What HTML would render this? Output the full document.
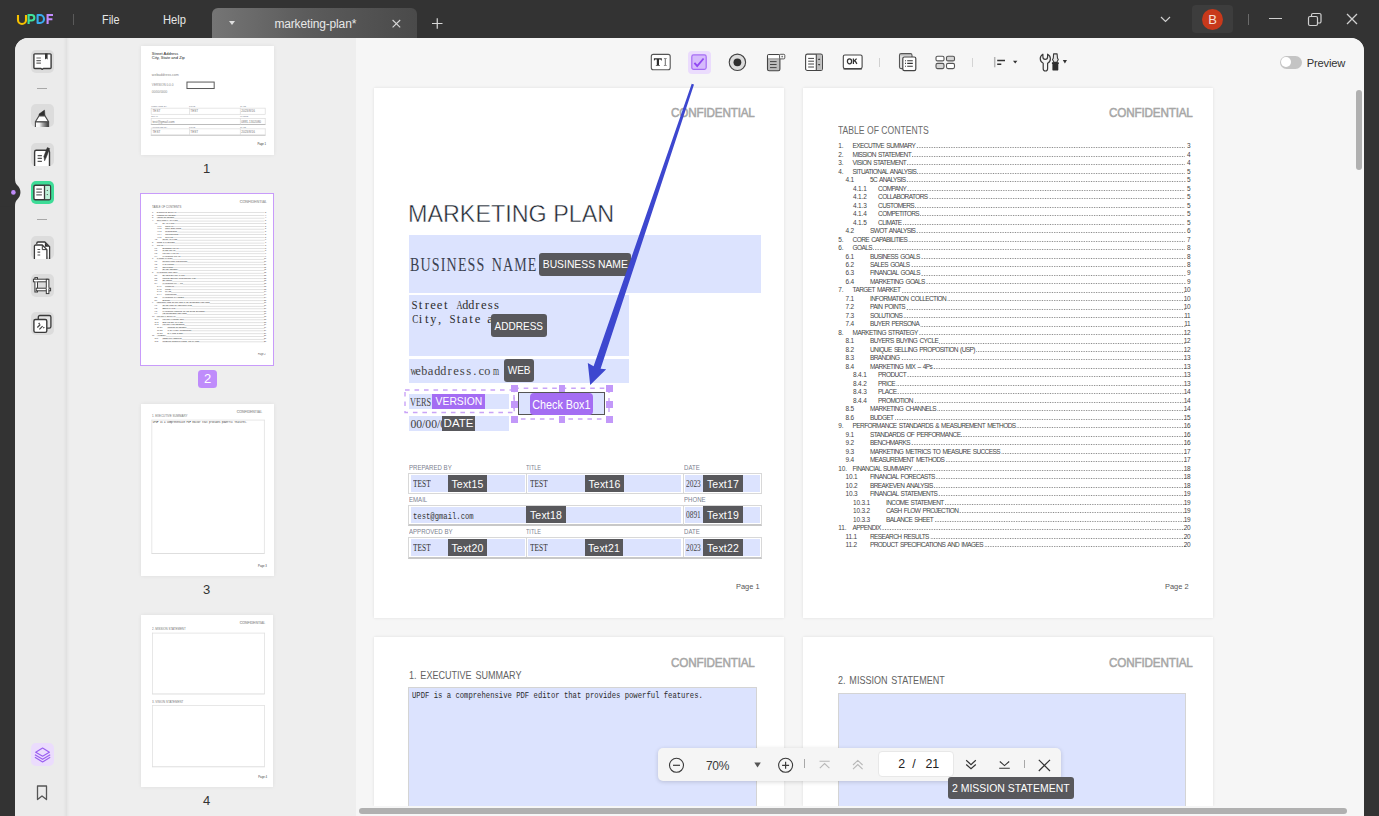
<!DOCTYPE html>
<html><head><meta charset="utf-8">
<style>
*{margin:0;padding:0;box-sizing:border-box}
html,body{width:1379px;height:816px;overflow:hidden;background:#333333;font-family:"Liberation Sans",sans-serif}
.a{position:absolute}
#panel{position:absolute;left:15px;top:38px;width:1349px;height:778px;background:#f6f6f6;border-radius:13px 13px 0 0;overflow:hidden}
#iconbar{position:absolute;left:0;top:0;width:52px;height:778px;background:#ebebeb}
#ibsh{position:absolute;left:48px;top:0;width:7px;height:778px;background:linear-gradient(90deg,rgba(0,0,0,0) 0%,rgba(0,0,0,0.045) 50%,rgba(0,0,0,0) 100%)}
#thumbs{position:absolute;left:52px;top:0;width:289px;height:778px;background:#eeeeee}
#doc{position:absolute;left:341px;top:0;width:1008px;height:778px;background:#f6f6f6}
.ib{position:absolute;left:16px;width:23px;height:23px;border-radius:5px;background:#dcdcdc}
.dash{position:absolute;left:22px;width:10px;height:1px;background:#a8a8a8}
.page{position:absolute;background:#fff;box-shadow:0 0 3px rgba(0,0,0,0.10)}
.fld{position:absolute;background:#dce3fe}
.badge{position:absolute;background:#58585c;color:#fff;border-radius:3px;font-size:11.5px;line-height:1;display:flex;align-items:center;justify-content:center;white-space:nowrap}
.pb{background:#a46df3}
.conf{position:absolute;font-weight:normal;color:#a6a6a6;-webkit-text-stroke:0.5px #a6a6a6;font-size:12.5px;letter-spacing:-0.2px;white-space:nowrap}
.t{position:absolute;white-space:nowrap}
.tc{position:absolute;white-space:nowrap;letter-spacing:-0.2px}
.tl{letter-spacing:-0.6px;word-spacing:1px}
.tl{background-image:linear-gradient(90deg,#8a8a8a 50%,transparent 50%);background-size:1.7px 0.8px;background-repeat:repeat-x;background-position:0 5.2px;height:7px}
.tl span{background:#fff;padding-right:1px}
.ms{position:absolute;white-space:nowrap;font-family:'Liberation Serif',serif}
.ms i{display:inline-block;font-style:normal;text-align:center}
.ms b{display:inline-block;font-weight:normal}
.th .tl{background-image:linear-gradient(#d2d2d2,#d2d2d2);background-size:100% 2px;background-position:0 5px}
</style></head><body>

<!-- ===== title bar ===== -->
<svg class="a" style="left:0;top:0" width="60" height="36" viewBox="0 0 60 36">
<path d="M18 15V20A4 4 0 0 0 26 20V15" stroke="#f6c100" stroke-width="2.1" fill="none"/>
<path d="M28.6 24V15H31.6A2.75 2.75 0 0 1 31.6 20.5H28.6" stroke="#3fe29b" stroke-width="2.1" fill="none"/>
<path d="M37.6 15V23H40A4 4 0 0 0 40 15Z" stroke="#38adf0" stroke-width="2.1" fill="none" stroke-linejoin="round"/>
<path d="M47.6 24V15H53M47.6 19.3H52.4" stroke="#c28bff" stroke-width="2.1" fill="none"/>
</svg>
<div class="a" style="left:73px;top:14px;width:1px;height:11px;background:#5a5a5a"></div>
<div class="t" style="left:101.5px;top:14.2px;color:#e6e6e6;font-size:12.2px;line-height:12.2px;transform-origin:0 0;transform:scaleX(0.89)">File</div>
<div class="t" style="left:162.5px;top:14.2px;color:#e6e6e6;font-size:12.2px;line-height:12.2px;transform-origin:0 0;transform:scaleX(0.92)">Help</div>

<div class="a" style="left:212px;top:8px;width:205px;height:30px;border-radius:6px 6px 0 0;background:linear-gradient(90deg,#757575 0%,#5c5c5c 45%,#4a4a4a 100%)"></div>
<div class="a" style="left:229px;top:21px;width:0;height:0;border-left:3.5px solid transparent;border-right:3.5px solid transparent;border-top:4px solid #e0e0e0"></div>
<div class="t" style="left:274.4px;top:17.6px;color:#e8e8e8;font-size:12px;line-height:12px;letter-spacing:-0.15px">marketing-plan*</div>
<svg class="a" style="left:390px;top:18px" width="12" height="12" viewBox="0 0 12 12"><path d="M2.6 2L10.2 9.4M10.2 2L2.6 9.4" stroke="#d8d8d8" stroke-width="1.1"/></svg>
<svg class="a" style="left:431px;top:17px" width="14" height="14" viewBox="0 0 14 14"><path d="M6.25 1.3V11.7M1 6.5H11.5" stroke="#d8d8d8" stroke-width="1.2"/></svg>

<svg class="a" style="left:1160px;top:16px" width="11" height="7" viewBox="0 0 11 7"><path d="M1 1L5.5 5.5L10 1" stroke="#cfcfcf" stroke-width="1.2" fill="none"/></svg>
<div class="a" style="left:1192px;top:5px;width:41px;height:28px;border-radius:4px;background:#3d3d3d"></div>
<div class="a" style="left:1202px;top:9px;width:21px;height:21px;border-radius:50%;background:#c8391b;color:#f6e0da;font-size:13px;line-height:21px;text-align:center">B</div>
<div class="a" style="left:1248px;top:14px;width:1px;height:11px;background:#6a6a6a"></div>
<div class="a" style="left:1269px;top:18px;width:13px;height:1.3px;background:#d0d0d0"></div>
<svg class="a" style="left:1307px;top:12px" width="16" height="16" viewBox="0 0 16 16"><rect x="1.5" y="4.5" width="9" height="9" rx="1.5" stroke="#d0d0d0" stroke-width="1.2" fill="none"/><path d="M4.5 4.5V3A1.5 1.5 0 0 1 6 1.5H12.5A1.5 1.5 0 0 1 14 3V9.5A1.5 1.5 0 0 1 12.5 11H10.5" stroke="#d0d0d0" stroke-width="1.2" fill="none"/></svg>
<svg class="a" style="left:1346px;top:13px" width="12" height="12" viewBox="0 0 12 12"><path d="M1 1L11 11M11 1L1 11" stroke="#d0d0d0" stroke-width="1.3"/></svg>

<div id="panel">
  <div id="iconbar"></div>
  <div id="thumbs"></div>
  <div id="ibsh"></div>
  <div id="doc"></div>
</div>

<!-- ===== thumbnails ===== -->
<div class="a" style="left:141px;top:46px;width:133px;height:109px;background:#fff;box-shadow:0 0 4px rgba(0,0,0,0.07)"></div>
<div class="a" style="left:141px;top:46px;width:133px;height:109px;overflow:hidden"><div class="a" style="left:0;top:0;width:1379px;height:1200px;transform-origin:0 0;transform:translate(-122.30px,-91.40px) scale(0.3239)">
<div class="t" style="left:411px;top:298px;font-size:12.5px;line-height:14.4px;color:#222">Street Address<br>City, State and Zip</div>
<div class="t" style="left:411px;top:365px;font-size:11px;line-height:13px;color:#888">webaddress.com</div>
<div class="t" style="left:411px;top:396px;font-size:9.5px;line-height:11px;color:#888">VERSION 0.0.0</div>
<div class="a" style="left:518px;top:392px;width:87px;height:23px;border:3.5px solid #555"></div>
<div class="t" style="left:411px;top:418px;font-size:9.5px;line-height:11px;color:#888">00/00/0000</div>
<div class="t" style="left:409px;top:464px;font-size:6.9px;line-height:7px;color:#7b8190">PREPARED BY</div>
<div class="t" style="left:526px;top:464px;font-size:6.9px;line-height:7px;color:#7b8190">TITLE</div>
<div class="t" style="left:684px;top:464px;font-size:6.9px;line-height:7px;color:#7b8190">DATE</div>
<div class="t" style="left:409px;top:496px;font-size:6.9px;line-height:7px;color:#7b8190">EMAIL</div>
<div class="t" style="left:684px;top:496px;font-size:6.9px;line-height:7px;color:#7b8190">PHONE</div>
<div class="t" style="left:409px;top:528px;font-size:6.9px;line-height:7px;color:#7b8190">APPROVED BY</div>
<div class="t" style="left:526px;top:528px;font-size:6.9px;line-height:7px;color:#7b8190">TITLE</div>
<div class="t" style="left:684px;top:528px;font-size:6.9px;line-height:7px;color:#7b8190">DATE</div>
<div class="a" style="left:408px;top:473px;width:354px;height:21px;border:2px solid #d8d8d8"></div>
<div class="a" style="left:526px;top:473px;width:2px;height:21px;background:#d8d8d8"></div>
<div class="a" style="left:683px;top:473px;width:2px;height:21px;background:#d8d8d8"></div>
<div class="a" style="left:408px;top:505px;width:354px;height:21px;border:2px solid #d8d8d8;border-bottom:3px solid #bbb"></div>
<div class="a" style="left:683px;top:505px;width:2px;height:20px;background:#d8d8d8"></div>
<div class="a" style="left:408px;top:537px;width:354px;height:22px;border:2px solid #d8d8d8;border-bottom:3px solid #bbb"></div>
<div class="a" style="left:526px;top:537px;width:2px;height:20px;background:#d8d8d8"></div>
<div class="a" style="left:683px;top:537px;width:2px;height:20px;background:#d8d8d8"></div>
<div class="t" style="left:413px;top:478px;font-size:9.5px;line-height:11px;color:#777">TEST</div>
<div class="t" style="left:530px;top:478px;font-size:9.5px;line-height:11px;color:#777">TEST</div>
<div class="t" style="left:687px;top:478px;font-size:9.5px;line-height:11px;color:#777">2023/8/16</div>
<div class="t" style="left:413px;top:510px;font-size:9.5px;line-height:11px;color:#777">test@gmail.com</div>
<div class="t" style="left:687px;top:510px;font-size:9.5px;line-height:11px;color:#777">0891-1302080</div>
<div class="t" style="left:413px;top:542px;font-size:9.5px;line-height:11px;color:#777">TEST</div>
<div class="t" style="left:530px;top:542px;font-size:9.5px;line-height:11px;color:#777">TEST</div>
<div class="t" style="left:687px;top:542px;font-size:9.5px;line-height:11px;color:#777">2023/8/16</div>
<div class="t" style="left:737px;top:582px;font-size:8.5px;line-height:9px;color:#333">Page 1</div>
</div></div>
<div class="t" style="left:203px;top:161px;font-size:13px;line-height:15px;color:#333">1</div>

<div class="a" style="left:140px;top:193px;width:134px;height:173px;background:#fff;border:1.6px solid #c89bfa"></div>
<div class="a" style="left:142px;top:195px;width:130px;height:169px;overflow:hidden"><div class="a th" style="left:0;top:0;width:1379px;height:1200px;transform-origin:0 0;transform:translate(-261.40px,-30.30px) scale(0.3239)">
<div class="conf" style="left:1109px;top:106px;font-size:12.6px;line-height:14px;transform-origin:0 0;transform:scaleX(0.93)">CONFIDENTIAL</div>
<div class="t" style="left:838px;top:125.5px;font-size:10px;line-height:10px;color:#6a6a6a;transform-origin:0 0;transform:scaleX(0.86)">TABLE OF CONTENTS</div>
<div class="a" style="left:0;top:0;font-size:6.5px;line-height:7px;color:#444">
<div class="tc" style="left:838.3px;top:142.1px">1.</div>
<div class="tc tl" style="left:852.6px;top:142.1px;width:332.9px"><span>EXECUTIVE SUMMARY</span></div>
<div class="tc" style="left:1170px;top:142.1px;width:20.5px;text-align:right">3</div>
<div class="tc" style="left:838.3px;top:150.6px">2.</div>
<div class="tc tl" style="left:852.6px;top:150.6px;width:332.9px"><span>MISSION STATEMENT</span></div>
<div class="tc" style="left:1170px;top:150.6px;width:20.5px;text-align:right">4</div>
<div class="tc" style="left:838.3px;top:159.1px">3.</div>
<div class="tc tl" style="left:852.6px;top:159.1px;width:332.9px"><span>VISION STATEMENT</span></div>
<div class="tc" style="left:1170px;top:159.1px;width:20.5px;text-align:right">4</div>
<div class="tc" style="left:838.3px;top:167.6px">4.</div>
<div class="tc tl" style="left:852.6px;top:167.6px;width:332.9px"><span>SITUATIONAL ANALYSIS</span></div>
<div class="tc" style="left:1170px;top:167.6px;width:20.5px;text-align:right">5</div>
<div class="tc" style="left:845.6px;top:176.1px">4.1</div>
<div class="tc tl" style="left:870.0px;top:176.1px;width:315.5px"><span>5C ANALYSIS</span></div>
<div class="tc" style="left:1170px;top:176.1px;width:20.5px;text-align:right">5</div>
<div class="tc" style="left:853.1px;top:184.5px">4.1.1</div>
<div class="tc tl" style="left:878.1px;top:184.5px;width:307.4px"><span>COMPANY</span></div>
<div class="tc" style="left:1170px;top:184.5px;width:20.5px;text-align:right">5</div>
<div class="tc" style="left:853.1px;top:193.0px">4.1.2</div>
<div class="tc tl" style="left:878.1px;top:193.0px;width:307.4px"><span>COLLABORATORS</span></div>
<div class="tc" style="left:1170px;top:193.0px;width:20.5px;text-align:right">5</div>
<div class="tc" style="left:853.1px;top:201.5px">4.1.3</div>
<div class="tc tl" style="left:878.1px;top:201.5px;width:307.4px"><span>CUSTOMERS</span></div>
<div class="tc" style="left:1170px;top:201.5px;width:20.5px;text-align:right">5</div>
<div class="tc" style="left:853.1px;top:210.0px">4.1.4</div>
<div class="tc tl" style="left:878.1px;top:210.0px;width:307.4px"><span>COMPETITORS</span></div>
<div class="tc" style="left:1170px;top:210.0px;width:20.5px;text-align:right">5</div>
<div class="tc" style="left:853.1px;top:218.5px">4.1.5</div>
<div class="tc tl" style="left:878.1px;top:218.5px;width:307.4px"><span>CLIMATE</span></div>
<div class="tc" style="left:1170px;top:218.5px;width:20.5px;text-align:right">5</div>
<div class="tc" style="left:845.6px;top:227.0px">4.2</div>
<div class="tc tl" style="left:870.0px;top:227.0px;width:315.5px"><span>SWOT ANALYSIS</span></div>
<div class="tc" style="left:1170px;top:227.0px;width:20.5px;text-align:right">6</div>
<div class="tc" style="left:838.3px;top:235.5px">5.</div>
<div class="tc tl" style="left:852.6px;top:235.5px;width:332.9px"><span>CORE CAPABILITIES</span></div>
<div class="tc" style="left:1170px;top:235.5px;width:20.5px;text-align:right">7</div>
<div class="tc" style="left:838.3px;top:244.0px">6.</div>
<div class="tc tl" style="left:852.6px;top:244.0px;width:332.9px"><span>GOALS</span></div>
<div class="tc" style="left:1170px;top:244.0px;width:20.5px;text-align:right">8</div>
<div class="tc" style="left:845.6px;top:252.5px">6.1</div>
<div class="tc tl" style="left:870.0px;top:252.5px;width:315.5px"><span>BUSINESS GOALS</span></div>
<div class="tc" style="left:1170px;top:252.5px;width:20.5px;text-align:right">8</div>
<div class="tc" style="left:845.6px;top:261.0px">6.2</div>
<div class="tc tl" style="left:870.0px;top:261.0px;width:315.5px"><span>SALES GOALS</span></div>
<div class="tc" style="left:1170px;top:261.0px;width:20.5px;text-align:right">8</div>
<div class="tc" style="left:845.6px;top:269.4px">6.3</div>
<div class="tc tl" style="left:870.0px;top:269.4px;width:315.5px"><span>FINANCIAL GOALS</span></div>
<div class="tc" style="left:1170px;top:269.4px;width:20.5px;text-align:right">9</div>
<div class="tc" style="left:845.6px;top:277.9px">6.4</div>
<div class="tc tl" style="left:870.0px;top:277.9px;width:315.5px"><span>MARKETING GOALS</span></div>
<div class="tc" style="left:1170px;top:277.9px;width:20.5px;text-align:right">9</div>
<div class="tc" style="left:838.3px;top:286.4px">7.</div>
<div class="tc tl" style="left:852.6px;top:286.4px;width:332.9px"><span>TARGET MARKET</span></div>
<div class="tc" style="left:1170px;top:286.4px;width:20.5px;text-align:right">10</div>
<div class="tc" style="left:845.6px;top:294.9px">7.1</div>
<div class="tc tl" style="left:870.0px;top:294.9px;width:315.5px"><span>INFORMATION COLLECTION</span></div>
<div class="tc" style="left:1170px;top:294.9px;width:20.5px;text-align:right">10</div>
<div class="tc" style="left:845.6px;top:303.4px">7.2</div>
<div class="tc tl" style="left:870.0px;top:303.4px;width:315.5px"><span>PAIN POINTS</span></div>
<div class="tc" style="left:1170px;top:303.4px;width:20.5px;text-align:right">10</div>
<div class="tc" style="left:845.6px;top:311.9px">7.3</div>
<div class="tc tl" style="left:870.0px;top:311.9px;width:315.5px"><span>SOLUTIONS</span></div>
<div class="tc" style="left:1170px;top:311.9px;width:20.5px;text-align:right">11</div>
<div class="tc" style="left:845.6px;top:320.4px">7.4</div>
<div class="tc tl" style="left:870.0px;top:320.4px;width:315.5px"><span>BUYER PERSONA</span></div>
<div class="tc" style="left:1170px;top:320.4px;width:20.5px;text-align:right">11</div>
<div class="tc" style="left:838.3px;top:328.9px">8.</div>
<div class="tc tl" style="left:852.6px;top:328.9px;width:332.9px"><span>MARKETING STRATEGY</span></div>
<div class="tc" style="left:1170px;top:328.9px;width:20.5px;text-align:right">12</div>
<div class="tc" style="left:845.6px;top:337.4px">8.1</div>
<div class="tc tl" style="left:870.0px;top:337.4px;width:315.5px"><span>BUYER'S BUYING CYCLE</span></div>
<div class="tc" style="left:1170px;top:337.4px;width:20.5px;text-align:right">12</div>
<div class="tc" style="left:845.6px;top:345.9px">8.2</div>
<div class="tc tl" style="left:870.0px;top:345.9px;width:315.5px"><span>UNIQUE SELLING PROPOSITION (USP)</span></div>
<div class="tc" style="left:1170px;top:345.9px;width:20.5px;text-align:right">12</div>
<div class="tc" style="left:845.6px;top:354.3px">8.3</div>
<div class="tc tl" style="left:870.0px;top:354.3px;width:315.5px"><span>BRANDING</span></div>
<div class="tc" style="left:1170px;top:354.3px;width:20.5px;text-align:right">13</div>
<div class="tc" style="left:845.6px;top:362.8px">8.4</div>
<div class="tc tl" style="left:870.0px;top:362.8px;width:315.5px"><span>MARKETING MIX – 4Ps</span></div>
<div class="tc" style="left:1170px;top:362.8px;width:20.5px;text-align:right">13</div>
<div class="tc" style="left:853.1px;top:371.3px">8.4.1</div>
<div class="tc tl" style="left:878.1px;top:371.3px;width:307.4px"><span>PRODUCT</span></div>
<div class="tc" style="left:1170px;top:371.3px;width:20.5px;text-align:right">13</div>
<div class="tc" style="left:853.1px;top:379.8px">8.4.2</div>
<div class="tc tl" style="left:878.1px;top:379.8px;width:307.4px"><span>PRICE</span></div>
<div class="tc" style="left:1170px;top:379.8px;width:20.5px;text-align:right">13</div>
<div class="tc" style="left:853.1px;top:388.3px">8.4.3</div>
<div class="tc tl" style="left:878.1px;top:388.3px;width:307.4px"><span>PLACE</span></div>
<div class="tc" style="left:1170px;top:388.3px;width:20.5px;text-align:right">14</div>
<div class="tc" style="left:853.1px;top:396.8px">8.4.4</div>
<div class="tc tl" style="left:878.1px;top:396.8px;width:307.4px"><span>PROMOTION</span></div>
<div class="tc" style="left:1170px;top:396.8px;width:20.5px;text-align:right">14</div>
<div class="tc" style="left:845.6px;top:405.3px">8.5</div>
<div class="tc tl" style="left:870.0px;top:405.3px;width:315.5px"><span>MARKETING CHANNELS</span></div>
<div class="tc" style="left:1170px;top:405.3px;width:20.5px;text-align:right">14</div>
<div class="tc" style="left:845.6px;top:413.8px">8.6</div>
<div class="tc tl" style="left:870.0px;top:413.8px;width:315.5px"><span>BUDGET</span></div>
<div class="tc" style="left:1170px;top:413.8px;width:20.5px;text-align:right">15</div>
<div class="tc" style="left:838.3px;top:422.3px">9.</div>
<div class="tc tl" style="left:852.6px;top:422.3px;width:332.9px"><span>PERFORMANCE STANDARDS &amp; MEASUREMENT METHODS</span></div>
<div class="tc" style="left:1170px;top:422.3px;width:20.5px;text-align:right">16</div>
<div class="tc" style="left:845.6px;top:430.8px">9.1</div>
<div class="tc tl" style="left:870.0px;top:430.8px;width:315.5px"><span>STANDARDS OF PERFORMANCE</span></div>
<div class="tc" style="left:1170px;top:430.8px;width:20.5px;text-align:right">16</div>
<div class="tc" style="left:845.6px;top:439.2px">9.2</div>
<div class="tc tl" style="left:870.0px;top:439.2px;width:315.5px"><span>BENCHMARKS</span></div>
<div class="tc" style="left:1170px;top:439.2px;width:20.5px;text-align:right">16</div>
<div class="tc" style="left:845.6px;top:447.7px">9.3</div>
<div class="tc tl" style="left:870.0px;top:447.7px;width:315.5px"><span>MARKETING METRICS TO MEASURE SUCCESS</span></div>
<div class="tc" style="left:1170px;top:447.7px;width:20.5px;text-align:right">17</div>
<div class="tc" style="left:845.6px;top:456.2px">9.4</div>
<div class="tc tl" style="left:870.0px;top:456.2px;width:315.5px"><span>MEASUREMENT METHODS</span></div>
<div class="tc" style="left:1170px;top:456.2px;width:20.5px;text-align:right">17</div>
<div class="tc" style="left:838.3px;top:464.7px">10.</div>
<div class="tc tl" style="left:852.6px;top:464.7px;width:332.9px"><span>FINANCIAL SUMMARY</span></div>
<div class="tc" style="left:1170px;top:464.7px;width:20.5px;text-align:right">18</div>
<div class="tc" style="left:845.6px;top:473.2px">10.1</div>
<div class="tc tl" style="left:870.0px;top:473.2px;width:315.5px"><span>FINANCIAL FORECASTS</span></div>
<div class="tc" style="left:1170px;top:473.2px;width:20.5px;text-align:right">18</div>
<div class="tc" style="left:845.6px;top:481.7px">10.2</div>
<div class="tc tl" style="left:870.0px;top:481.7px;width:315.5px"><span>BREAKEVEN ANALYSIS</span></div>
<div class="tc" style="left:1170px;top:481.7px;width:20.5px;text-align:right">18</div>
<div class="tc" style="left:845.6px;top:490.2px">10.3</div>
<div class="tc tl" style="left:870.0px;top:490.2px;width:315.5px"><span>FINANCIAL STATEMENTS</span></div>
<div class="tc" style="left:1170px;top:490.2px;width:20.5px;text-align:right">19</div>
<div class="tc" style="left:853.1px;top:498.7px">10.3.1</div>
<div class="tc tl" style="left:886.0px;top:498.7px;width:299.5px"><span>INCOME STATEMENT</span></div>
<div class="tc" style="left:1170px;top:498.7px;width:20.5px;text-align:right">19</div>
<div class="tc" style="left:853.1px;top:507.2px">10.3.2</div>
<div class="tc tl" style="left:886.0px;top:507.2px;width:299.5px"><span>CASH FLOW PROJECTION</span></div>
<div class="tc" style="left:1170px;top:507.2px;width:20.5px;text-align:right">19</div>
<div class="tc" style="left:853.1px;top:515.7px">10.3.3</div>
<div class="tc tl" style="left:886.0px;top:515.7px;width:299.5px"><span>BALANCE SHEET</span></div>
<div class="tc" style="left:1170px;top:515.7px;width:20.5px;text-align:right">19</div>
<div class="tc" style="left:838.3px;top:524.1px">11.</div>
<div class="tc tl" style="left:852.6px;top:524.1px;width:332.9px"><span>APPENDIX</span></div>
<div class="tc" style="left:1170px;top:524.1px;width:20.5px;text-align:right">20</div>
<div class="tc" style="left:845.6px;top:532.6px">11.1</div>
<div class="tc tl" style="left:870.0px;top:532.6px;width:315.5px"><span>RESEARCH RESULTS</span></div>
<div class="tc" style="left:1170px;top:532.6px;width:20.5px;text-align:right">20</div>
<div class="tc" style="left:845.6px;top:541.1px">11.2</div>
<div class="tc tl" style="left:870.0px;top:541.1px;width:315.5px"><span>PRODUCT SPECIFICATIONS AND IMAGES</span></div>
<div class="tc" style="left:1170px;top:541.1px;width:20.5px;text-align:right">20</div>
</div>

<div class="t" style="left:1165px;top:582px;font-size:8px;line-height:9px;color:#555;transform-origin:0 0;transform:scaleX(0.93)">Page 2</div>

</div></div>
<div class="a" style="left:198px;top:370px;width:19px;height:18.3px;border-radius:3.5px;background:#bf8cfb"></div>
<div class="t" style="left:198px;top:371px;width:19px;text-align:center;font-size:13px;line-height:16px;color:#fff">2</div>

<div class="a" style="left:141px;top:404px;width:133px;height:172px;background:#fff;box-shadow:0 0 4px rgba(0,0,0,0.07)"></div>
<div class="a" style="left:141px;top:404px;width:133px;height:172px;overflow:hidden"><div class="a" style="left:0;top:0;width:1379px;height:1200px;transform-origin:0 0;transform:translate(-121.60px,-206.80px) scale(0.3239)">
<div class="conf" style="left:671px;top:656px;font-size:12.6px;line-height:14px;color:#999;transform-origin:0 0;transform:scaleX(0.87)">CONFIDENTIAL</div>
<div class="t" style="left:409px;top:670px;font-size:10.4px;line-height:11px;color:#777;transform-origin:0 0;transform:scaleX(0.87)">1. EXECUTIVE SUMMARY</div>
<div class="a" style="left:408px;top:687px;width:349px;height:414px;border:2.5px solid #dadada;border-bottom-color:#ccc"></div>
<div class="t" style="left:412px;top:691px;font-family:'Liberation Mono',monospace;font-size:8.9px;line-height:10px;color:#333;transform-origin:0 0;transform:scaleX(0.815)">UPDF is a comprehensive PDF editor that provides powerful features.</div>
<div class="t" style="left:737px;top:1134px;font-size:8.5px;line-height:9px;color:#444">Page 3</div>
</div></div>
<div class="t" style="left:203px;top:582px;font-size:13px;line-height:15px;color:#333">3</div>

<div class="a" style="left:141px;top:615px;width:132px;height:172px;background:#fff;box-shadow:0 0 4px rgba(0,0,0,0.07)"></div>
<div class="a" style="left:141px;top:615px;width:132px;height:172px;overflow:hidden"><div class="a" style="left:0;top:0;width:1379px;height:1200px;transform-origin:0 0;transform:translate(-260.40px,-206.70px) scale(0.3239)">
<div class="conf" style="left:1109px;top:656px;font-size:12.6px;line-height:14px;color:#999;transform-origin:0 0;transform:scaleX(0.87)">CONFIDENTIAL</div>
<div class="t" style="left:838px;top:675px;font-size:10.4px;line-height:11px;color:#777;transform-origin:0 0;transform:scaleX(0.87)">2. MISSION STATEMENT</div>
<div class="a" style="left:838px;top:693px;width:348px;height:190px;border:2.5px solid #dadada;border-bottom-color:#ccc"></div>
<div class="t" style="left:838px;top:901px;font-size:10.4px;line-height:11px;color:#777;transform-origin:0 0;transform:scaleX(0.87)">3. VISION STATEMENT</div>
<div class="a" style="left:838px;top:917px;width:348px;height:191px;border:2.5px solid #dadada;border-bottom-color:#ccc"></div>
<div class="t" style="left:1166px;top:1133px;font-size:8.5px;line-height:9px;color:#444">Page 4</div>
</div></div>
<div class="t" style="left:203px;top:793px;font-size:13px;line-height:15px;color:#333">4</div>

<!-- ===== doc toolbar ===== -->
<svg class="a" style="left:650px;top:53px" width="22" height="18" viewBox="0 0 22 18">
<rect x="1.3" y="1.4" width="18.9" height="15.4" rx="2" fill="#fff" stroke="#555" stroke-width="1.1"/>
<path d="M3.9 5.2H11.8V7.6L11.2 7.6L10.6 6.5H9V11.9L10 12.2V12.8H5.8V12.2L6.8 11.9V6.5H5.1L4.5 7.6H3.9Z" fill="#2e2e2e"/>
<path d="M13.9 5.3H16.7V5.9L15.8 6.1V11.9L16.7 12.1V12.8H13.9V12.1L14.8 11.9V6.1L13.9 5.9Z" fill="#6a6a6a"/>
</svg>
<div class="a" style="left:687.5px;top:50.5px;width:23px;height:23px;border-radius:4px;background:#ebdcfd"></div>
<svg class="a" style="left:690px;top:53px" width="18" height="18" viewBox="0 0 18 18">
<rect x="1.8" y="1.9" width="14.4" height="14.4" rx="1.8" fill="#d6bbfc" stroke="#a56cf4" stroke-width="1.2"/>
<path d="M4.4 9.9L7.2 13L13.6 5.5" stroke="#9149f2" stroke-width="1.9" fill="none" stroke-linejoin="miter"/>
</svg>
<svg class="a" style="left:727px;top:52px" width="20" height="20" viewBox="0 0 20 20">
<circle cx="10.4" cy="10.3" r="8.2" fill="#dcdcdc" stroke="#444" stroke-width="1.1"/>
<circle cx="10.4" cy="10.3" r="3.9" fill="#2e2e2e"/>
</svg>
<svg class="a" style="left:766px;top:52px" width="20" height="20" viewBox="0 0 20 20">
<rect x="1.5" y="2.5" width="12.4" height="16.3" rx="1.6" fill="#bdbdbd" stroke="#444" stroke-width="1.1"/>
<rect x="2.1" y="3.1" width="11.2" height="3.6" fill="#fff"/>
<path d="M2 6.8H13.4" stroke="#666" stroke-width="0.6"/>
<path d="M4 9.6H10.6M4 12.5H10.6M4 15.6H10.6" stroke="#444" stroke-width="1"/>
<rect x="13.6" y="2.3" width="5.2" height="4.6" rx="1" fill="#fff" stroke="#444" stroke-width="0.9"/>
<path d="M16.2 3.7V5.5M15.3 4.6H17.1" stroke="#444" stroke-width="0.6"/>
</svg>
<svg class="a" style="left:804px;top:52px" width="20" height="20" viewBox="0 0 20 20">
<rect x="1.6" y="2.1" width="16.8" height="16.4" rx="1.8" fill="#fff" stroke="#444" stroke-width="1.1"/>
<rect x="12.3" y="2.7" width="5.5" height="15.2" fill="#bdbdbd"/>
<path d="M12.3 2.2V18.4" stroke="#444" stroke-width="1.1"/>
<path d="M4.2 6.4H10M4.2 9.2H10M4.2 12H10M4.2 15H10" stroke="#444" stroke-width="1"/>
<path d="M13.9 8L15.1 6.3L16.3 8ZM13.9 12L15.1 13.7L16.3 12Z" fill="#333"/>
</svg>
<svg class="a" style="left:841px;top:53px" width="22" height="18" viewBox="0 0 22 18">
<rect x="2.3" y="2" width="18.8" height="13.6" rx="1.6" fill="#fff" stroke="#444" stroke-width="1.1"/>
<path d="M2.5 15.9H20.9" stroke="#444" stroke-width="1.3"/>
<path d="M10.6 8.3A2.1 2.55 0 1 1 6.4 8.3A2.1 2.55 0 1 1 10.6 8.3Z" fill="none" stroke="#333" stroke-width="1.25"/>
<path d="M12.4 5.6V10.9M12.4 8.7L15.6 5.6M13.8 7.4L15.9 10.9" fill="none" stroke="#333" stroke-width="1.25"/>
</svg>
<div class="a" style="left:879px;top:58px;width:1px;height:9px;background:#d0d0d0"></div>
<svg class="a" style="left:898px;top:52px" width="20" height="20" viewBox="0 0 20 20">
<rect x="1.5" y="1.6" width="12.5" height="15" rx="1.6" fill="#e2e2e2" stroke="#555" stroke-width="1.1"/>
<path d="M2.6 2.9H12.8" stroke="#888" stroke-width="0.6"/>
<rect x="4.8" y="5" width="13" height="13.6" rx="1.6" fill="#fff" stroke="#444" stroke-width="1.2"/>
<path d="M7 8.7H7.9M9.2 8.7H14.8M7 11.4H7.9M9.2 11.4H14.8M7 14.3H7.9M9.2 14.3H14.8" stroke="#333" stroke-width="1.1"/>
</svg>
<svg class="a" style="left:934px;top:54px" width="22" height="17" viewBox="0 0 22 17">
<rect x="2" y="2.3" width="8" height="4.6" rx="1.5" fill="#fff" stroke="#555" stroke-width="1.1"/>
<rect x="12.5" y="2.3" width="8" height="4.6" rx="1.5" fill="#d6d6d6" stroke="#555" stroke-width="1.1"/>
<rect x="2" y="9.4" width="8" height="5.2" rx="1.5" fill="#d6d6d6" stroke="#555" stroke-width="1.1"/>
<rect x="12.5" y="9.4" width="8" height="5.2" rx="1.5" fill="#fff" stroke="#555" stroke-width="1.1"/>
</svg>
<div class="a" style="left:972px;top:58px;width:1px;height:9px;background:#d4d4d4"></div>
<svg class="a" style="left:992px;top:54px" width="28" height="17" viewBox="0 0 28 17">
<path d="M2.7 3V13.3" stroke="#b4b4b4" stroke-width="1.5"/>
<path d="M5.2 6.4H13M5.2 10.3H9.3" stroke="#333" stroke-width="1.5"/>
<path d="M21 6.7H25.4L23.2 9.4Z" fill="#333"/>
</svg>
<svg class="a" style="left:1038px;top:52px" width="32" height="20" viewBox="0 0 32 20">
<path d="M4.9 2.2V5.05A2.35 2.35 0 0 0 9.6 5.05V2.2A5.1 5.1 0 0 1 9.6 11.3V16.8A2.2 2.2 0 0 1 5.2 16.8V11.3A5.1 5.1 0 0 1 4.9 2.2Z" fill="#f4f4f4" stroke="#3a3a3a" stroke-width="1.2" stroke-linejoin="round"/>
<path d="M15.6 1.9H19.1L19.5 6.2L20.3 7.6L18.7 10.4H16.1L14.5 7.6L15.3 6.2Z" fill="#e4e4e4" stroke="#3a3a3a" stroke-width="1.1" stroke-linejoin="round"/>
<rect x="14.4" y="10.4" width="5.9" height="8.2" rx="1.2" fill="#2e2e2e"/>
<rect x="13.9" y="10.3" width="6.9" height="1.6" rx="0.5" fill="#2e2e2e"/>
<path d="M24.8 8.1H29L26.9 11.5Z" fill="#333"/>
</svg>

<!-- preview toggle -->
<div class="a" style="left:1279.5px;top:55.5px;width:22.6px;height:13.4px;border-radius:7px;background:#c4c4c4"></div>
<div class="a" style="left:1281.1px;top:57.4px;width:9.8px;height:9.8px;border-radius:50%;background:#fff"></div>
<div class="t" style="left:1306.8px;top:57.5px;font-size:11.2px;line-height:11.2px;color:#333;letter-spacing:-0.2px">Preview</div>

<!-- ===== icon sidebar ===== -->
<div class="ib" style="left:31px;top:50px"></div>
<svg class="a" style="left:31px;top:50px" width="23" height="23" viewBox="0 0 23 23">
<path d="M3.8 3.9H19.2A0.9 0.9 0 0 1 20.1 4.8V17.6A0.9 0.9 0 0 1 19.2 18.5H12.4L11.2 19.4L10 18.5H3.8A0.9 0.9 0 0 1 2.9 17.6V4.8A0.9 0.9 0 0 1 3.8 3.9Z" fill="#fff" stroke="#3a3a3a" stroke-width="1.4" stroke-linejoin="round"/>
<path d="M5.4 8H9.9M5.4 10.6H9.9M5.4 13.2H9.9" stroke="#666" stroke-width="1.2"/>
<path d="M14 3.5V9.6L15.3 8.5L16.6 9.6V3.5Z" fill="#333"/>
</svg>
<div class="dash" style="left:37px;top:88px"></div>
<div class="ib" style="left:31px;top:104px"></div>
<svg class="a" style="left:31px;top:104px" width="23" height="23" viewBox="0 0 23 23">
<defs><linearGradient id="hg" x1="0" x2="1" y1="0" y2="0"><stop offset="0" stop-color="#fff"/><stop offset="0.3" stop-color="#f4f4f4"/><stop offset="0.55" stop-color="#a8a8a8"/><stop offset="1" stop-color="#3a3a3a"/></linearGradient></defs>
<path d="M8 10.1L13.5 6.1L14 11.9H8Z" fill="#2e2e2e" stroke="#2e2e2e" stroke-width="0.5" stroke-linejoin="round"/>
<path d="M8 11.9H14L17.6 17.8H4.4Z" fill="#fff" stroke="#4a4a4a" stroke-width="1.1" stroke-linejoin="round"/>
<rect x="4.4" y="18" width="13.2" height="5" fill="url(#hg)"/>
<path d="M4.4 18H17.6" stroke="#4a4a4a" stroke-width="1"/>
<path d="M4.4 17.8V23M17.6 17.8V23" stroke="#4a4a4a" stroke-width="1.1"/>
</svg>
<div class="ib" style="left:31px;top:143px"></div>
<svg class="a" style="left:31px;top:143px" width="23" height="23" viewBox="0 0 23 23">
<path d="M3.6 23V8.9A1.6 1.6 0 0 1 5.2 7.3H16.9A1.6 1.6 0 0 1 18.5 8.9V23" fill="#fff" stroke="#3a3a3a" stroke-width="1.4"/>
<path d="M6.6 12.6H10.9M6.6 15.4H10.9M6.6 18.3H10.9" stroke="#555" stroke-width="1.2"/>
<path d="M16.3 4.6L18.7 5.6L15.3 14.2L13.6 17.8L12.9 13.3Z" fill="#333" stroke="#333" stroke-width="0.5" stroke-linejoin="round"/>
</svg>
<div class="a" style="left:31px;top:181px;width:23px;height:23px;border-radius:5px;background:#3ddc97"></div>
<svg class="a" style="left:31px;top:181px" width="23" height="23" viewBox="0 0 23 23">
<rect x="2.9" y="4.2" width="16.6" height="14.6" rx="1.5" fill="#fff" stroke="#3a3a3a" stroke-width="1.4"/>
<rect x="13.5" y="4.9" width="5.3" height="13.2" fill="#bdf2d9"/>
<path d="M13.5 4.2V18.8" stroke="#3a3a3a" stroke-width="1.3"/>
<path d="M5.3 8.2H10.9M5.3 11.1H10.9M5.3 13.9H10.9" stroke="#666" stroke-width="1.3"/>
<path d="M15.4 10L16.3 8.7L17.2 10ZM15.4 13L16.3 14.3L17.2 13Z" fill="#555"/>
</svg>
<div class="dash" style="left:37px;top:219px"></div>
<div class="ib" style="left:31px;top:236px"></div>
<svg class="a" style="left:31px;top:236px" width="23" height="23" viewBox="0 0 23 23">
<path d="M5.8 8V7.2A1.2 1.2 0 0 1 7 6H13.9L18.6 10.7V23" fill="#fff" stroke="#3a3a3a" stroke-width="1.3" stroke-linejoin="round"/>
<path d="M13.9 6.6L18 10.7H13.9Z" fill="#333"/>
<path d="M3.4 23V10.2A1.2 1.2 0 0 1 4.6 9H11.3L15.9 13.6V23" fill="#fff" stroke="#3a3a3a" stroke-width="1.3" stroke-linejoin="round"/>
<path d="M11.3 9V13.6H15.9" fill="none" stroke="#3a3a3a" stroke-width="1"/>
<path d="M6.5 13.5H9.2M6.5 16.2H9.2M6.5 19H9.2" stroke="#555" stroke-width="1.2"/>
</svg>
<div class="ib" style="left:31px;top:274px"></div>
<svg class="a" style="left:31px;top:274px" width="23" height="23" viewBox="0 0 23 23">
<rect x="3.9" y="3.6" width="2.6" height="14.4" fill="#fff" stroke="#3a3a3a" stroke-width="1"/>
<rect x="2.4" y="5.2" width="14.6" height="2.6" fill="#fff" stroke="#3a3a3a" stroke-width="1"/>
<rect x="5.2" y="14.2" width="14.4" height="2.6" fill="#fff" stroke="#3a3a3a" stroke-width="1"/>
<rect x="15.3" y="5.3" width="2.6" height="14.3" fill="#fff" stroke="#3a3a3a" stroke-width="1"/>
<path d="M3.9 7.8H6.5M15.3 14.2H17.9" stroke="#fff" stroke-width="0.6"/>
</svg>
<div class="ib" style="left:31px;top:312px"></div>
<svg class="a" style="left:31px;top:312px" width="23" height="23" viewBox="0 0 23 23">
<rect x="7.3" y="3.5" width="12.6" height="12.6" rx="1.6" fill="#e4e4e4" stroke="#3a3a3a" stroke-width="1.3"/>
<rect x="2.9" y="7.5" width="12.9" height="12.9" rx="1.6" fill="#fff" stroke="#3a3a3a" stroke-width="1.4"/>
<path d="M6.3 15.5L9.3 12.5M8.4 17.4L11.6 14.2M7.6 12L8.6 11M12.3 16.1L13.3 15.1" stroke="#444" stroke-width="1.2"/>
</svg>
<div class="a" style="left:31px;top:743px;width:23px;height:23px;border-radius:5px;background:#ebdcfd"></div>
<svg class="a" style="left:31px;top:743px" width="23" height="23" viewBox="0 0 23 23">
<path d="M4.7 9.2L11.6 5L18.4 9.2L11.6 13.2Z" fill="none" stroke="#9a5ff0" stroke-width="1.2" stroke-linejoin="round"/>
<path d="M3.9 11.8L11.6 16.3L19.2 11.8M3.9 14.3L11.6 18.9L19.2 14.3" fill="none" stroke="#9a5ff0" stroke-width="1.2" stroke-linejoin="round"/>
</svg>
<svg class="a" style="left:36px;top:785px" width="12" height="16" viewBox="0 0 12 16">
<path d="M1.5 1V14.6L6 11L10.5 14.6V1Z" fill="none" stroke="#555" stroke-width="1.3" stroke-linejoin="round"/>
</svg>

<!-- left bump -->
<svg class="a" style="left:0;top:170px" width="24" height="45" viewBox="0 0 24 45"><path d="M0 8H15C15 12 15.6 13.6 17.3 15.2A9.6 9.6 0 0 1 17.3 29.4C15.6 31 15 32.6 15 36.6H0Z" fill="#333"/><circle cx="13.4" cy="22.4" r="2.3" fill="#bf8bf9"/></svg>

<!-- ===== pages ===== -->
<div class="page" style="left:374px;top:88px;width:410px;height:530px"></div>
<div class="page" style="left:803px;top:88px;width:410px;height:530px"></div>
<div class="page" style="left:374px;top:637px;width:410px;height:169px"></div>
<div class="page" style="left:803px;top:637px;width:410px;height:169px"></div>

<!-- ===== page 1 content ===== -->
<div class="conf" style="left:671px;top:106px;font-size:12.6px;line-height:14px;transform-origin:0 0;transform:scaleX(0.93)">CONFIDENTIAL</div>
<div class="t" style="left:408px;top:202px;font-size:24px;line-height:24px;color:#1f2833;-webkit-text-stroke:0.45px #fff;transform-origin:0 0;transform:scaleX(0.972)">MARKETING PLAN</div>
<div class="fld" style="left:409px;top:235px;width:352px;height:58px"></div>
<div class="t" style="left:410px;top:255px;font-family:'Liberation Serif',serif;font-size:19.5px;line-height:20px;color:#3a4150;letter-spacing:1.6px;word-spacing:2px;transform-origin:0 0;transform:scaleX(0.72)">BUSINESS NAME</div>
<div class="badge" style="left:539px;top:253px;width:92px;height:23px"><span style="display:inline-block;transform:scaleX(0.9)">BUSINESS NAME</span></div>

<div class="fld" style="left:409px;top:295px;width:220px;height:61px"></div>
<div class="ms" style="left:411px;top:298px;font-size:12.7px;line-height:14.4px;color:#2e2e2e"><i style="width:6.33px"><b style="transform:scaleX(0.860)">S</b></i><i style="width:6.33px">t</i><i style="width:6.33px">r</i><i style="width:6.33px">e</i><i style="width:6.33px">e</i><i style="width:6.33px">t</i><i style="width:6.33px"></i><i style="width:6.33px"><b style="transform:scaleX(0.663)">A</b></i><i style="width:6.33px"><b style="transform:scaleX(0.957)">d</b></i><i style="width:6.33px"><b style="transform:scaleX(0.957)">d</b></i><i style="width:6.33px">r</i><i style="width:6.33px">e</i><i style="width:6.33px">s</i><i style="width:6.33px">s</i><br><i style="width:6.33px"><b style="transform:scaleX(0.717)">C</b></i><i style="width:6.33px">i</i><i style="width:6.33px">t</i><i style="width:6.33px"><b style="transform:scaleX(0.957)">y</b></i><i style="width:6.33px">,</i><i style="width:6.33px"></i><i style="width:6.33px"><b style="transform:scaleX(0.860)">S</b></i><i style="width:6.33px">t</i><i style="width:6.33px">a</i><i style="width:6.33px">t</i><i style="width:6.33px">e</i><i style="width:6.33px"></i><i style="width:6.33px">a</i><i style="width:6.33px"><b style="transform:scaleX(0.957)">n</b></i><i style="width:6.33px"><b style="transform:scaleX(0.957)">d</b></i><i style="width:6.33px"></i><i style="width:6.33px"><b style="transform:scaleX(0.783)">Z</b></i><i style="width:6.33px">i</i><i style="width:6.33px"><b style="transform:scaleX(0.957)">p</b></i></div>
<div class="badge" style="left:491px;top:314px;width:56px;height:23px;padding-top:2px"><span style="display:inline-block;transform:scaleX(0.87)">ADDRESS</span></div>

<div class="fld" style="left:409px;top:359px;width:220px;height:24px"></div>
<div class="ms" style="left:408.5px;top:364px;font-size:12.7px;line-height:14px;color:#444"><i style="width:6.33px"><b style="transform:scaleX(0.663)">w</b></i><i style="width:6.33px">e</i><i style="width:6.33px"><b style="transform:scaleX(0.957)">b</b></i><i style="width:6.33px">a</i><i style="width:6.33px"><b style="transform:scaleX(0.957)">d</b></i><i style="width:6.33px"><b style="transform:scaleX(0.957)">d</b></i><i style="width:6.33px">r</i><i style="width:6.33px">e</i><i style="width:6.33px">s</i><i style="width:6.33px">s</i><i style="width:6.33px">.</i><i style="width:6.33px">c</i><i style="width:6.33px"><b style="transform:scaleX(0.957)">o</b></i><i style="width:6.33px"><b style="transform:scaleX(0.615)">m</b></i></div>
<div class="badge" style="left:504px;top:359px;width:30px;height:23px"><span style="display:inline-block;transform:scaleX(0.87)">WEB</span></div>

<div class="fld" style="left:409px;top:394px;width:100px;height:15px"></div>
<div class="t" style="left:410.4px;top:395.5px;font-family:'Liberation Serif',serif;font-size:11.5px;line-height:13px;color:#444;transform-origin:0 0;transform:scaleX(0.72)">VERS</div>
<div class="badge pb" style="left:432px;top:394px;width:53px;height:15px;border-radius:0"><span style="display:inline-block;transform:scaleX(0.9)">VERSION</span></div>
<svg class="a" style="left:403px;top:388px" width="114" height="27" viewBox="0 0 114 27"><rect x="2" y="2" width="109" height="22.5" fill="none" stroke="#c9a3f7" stroke-width="1.4" stroke-dasharray="4.6 4.9"/></svg>

<div class="fld" style="left:409px;top:416px;width:100px;height:15px"></div>
<div class="t" style="left:410.4px;top:417.5px;font-family:'Liberation Serif',serif;font-size:11.7px;line-height:13px;color:#444">00/00/0</div>
<div class="badge" style="left:442px;top:416px;width:33px;height:15px;border-radius:0">DATE</div>

<svg class="a" style="left:512px;top:386px" width="100" height="36" viewBox="0 0 100 36"><rect x="2.2" y="2.3" width="94.8" height="30.7" fill="none" stroke="#c9a3f7" stroke-width="1.4" stroke-dasharray="4.6 4.9"/></svg>
<div class="a" style="left:518px;top:392.4px;width:87px;height:23px;background:#dce3fe;border:1.4px solid #555"></div>
<div class="badge pb" style="left:529.5px;top:392.5px;width:63.5px;height:22.6px;border-radius:4px;font-size:12px;padding-top:2.5px"><span style="display:inline-block;transform:scaleX(0.9)">Check Box1</span></div>
<div class="a" style="left:511px;top:385px;width:6.5px;height:6.5px;background:#c298f9"></div>
<div class="a" style="left:558.5px;top:385px;width:6.5px;height:6.5px;background:#c298f9"></div>
<div class="a" style="left:606px;top:385px;width:6.5px;height:6.5px;background:#c298f9"></div>
<div class="a" style="left:511px;top:401px;width:6.5px;height:6.5px;background:#c298f9"></div>
<div class="a" style="left:606px;top:401px;width:6.5px;height:6.5px;background:#c298f9"></div>
<div class="a" style="left:511px;top:416px;width:6.5px;height:6.5px;background:#c298f9"></div>
<div class="a" style="left:558.5px;top:416px;width:6.5px;height:6.5px;background:#c298f9"></div>
<div class="a" style="left:606px;top:416px;width:6.5px;height:6.5px;background:#c298f9"></div>

<!-- table -->
<div class="t" style="left:409px;top:464px;font-size:6.9px;line-height:7px;color:#7b8190;transform-origin:0 0;transform:scaleX(0.88)">PREPARED BY</div>
<div class="t" style="left:526px;top:464px;font-size:6.9px;line-height:7px;color:#7b8190;transform-origin:0 0;transform:scaleX(0.8)">TITLE</div>
<div class="t" style="left:684px;top:464px;font-size:6.9px;line-height:7px;color:#7b8190;transform-origin:0 0;transform:scaleX(0.88)">DATE</div>
<div class="t" style="left:409px;top:496px;font-size:6.9px;line-height:7px;color:#7b8190;transform-origin:0 0;transform:scaleX(0.88)">EMAIL</div>
<div class="t" style="left:684px;top:496px;font-size:6.9px;line-height:7px;color:#7b8190;transform-origin:0 0;transform:scaleX(0.88)">PHONE</div>
<div class="t" style="left:409px;top:528px;font-size:6.9px;line-height:7px;color:#7b8190;transform-origin:0 0;transform:scaleX(0.88)">APPROVED BY</div>
<div class="t" style="left:526px;top:528px;font-size:6.9px;line-height:7px;color:#7b8190;transform-origin:0 0;transform:scaleX(0.8)">TITLE</div>
<div class="t" style="left:684px;top:528px;font-size:6.9px;line-height:7px;color:#7b8190;transform-origin:0 0;transform:scaleX(0.88)">DATE</div>

<div class="a" style="left:408px;top:473px;width:354px;height:21px;border:1px solid #d8d8d8"></div>
<div class="a" style="left:526px;top:473px;width:1px;height:21px;background:#d8d8d8"></div>
<div class="a" style="left:683px;top:473px;width:1px;height:21px;background:#d8d8d8"></div>
<div class="fld" style="left:411px;top:475px;width:114px;height:17px"></div>
<div class="fld" style="left:528px;top:475px;width:153px;height:17px"></div>
<div class="fld" style="left:685px;top:475px;width:75px;height:17px"></div>

<div class="a" style="left:408px;top:505px;width:354px;height:21px;border:1px solid #d8d8d8;border-bottom:2px solid #c8c8c8"></div>
<div class="a" style="left:683px;top:505px;width:1px;height:20px;background:#d8d8d8"></div>
<div class="fld" style="left:411px;top:507px;width:270px;height:16px"></div>
<div class="fld" style="left:685px;top:507px;width:75px;height:16px"></div>

<div class="a" style="left:408px;top:537px;width:354px;height:22px;border:1px solid #d8d8d8;border-bottom:2px solid #c8c8c8"></div>
<div class="a" style="left:526px;top:537px;width:1px;height:20px;background:#d8d8d8"></div>
<div class="a" style="left:683px;top:537px;width:1px;height:20px;background:#d8d8d8"></div>
<div class="fld" style="left:411px;top:539px;width:114px;height:17px"></div>
<div class="fld" style="left:528px;top:539px;width:153px;height:17px"></div>
<div class="fld" style="left:685px;top:539px;width:75px;height:17px"></div>

<div class="t" style="left:413px;top:479px;font-family:'Liberation Serif',serif;font-size:9.5px;line-height:11px;color:#333;transform-origin:0 0;transform:scaleX(0.78)">TEST</div>
<div class="t" style="left:530px;top:479px;font-family:'Liberation Serif',serif;font-size:9.5px;line-height:11px;color:#333;transform-origin:0 0;transform:scaleX(0.78)">TEST</div>
<div class="t" style="left:686px;top:479px;font-family:'Liberation Serif',serif;font-size:9.5px;line-height:11px;color:#444;transform-origin:0 0;transform:scaleX(0.78)">2023</div>
<div class="t" style="left:413px;top:510.5px;font-family:'Liberation Mono',monospace;font-size:9.5px;line-height:11px;color:#333;transform-origin:0 0;transform:scaleX(0.76)">test@gmail.com</div>
<div class="t" style="left:686px;top:510px;font-family:'Liberation Serif',serif;font-size:9.5px;line-height:11px;color:#444;transform-origin:0 0;transform:scaleX(0.78)">0891</div>
<div class="t" style="left:413px;top:543px;font-family:'Liberation Serif',serif;font-size:9.5px;line-height:11px;color:#333;transform-origin:0 0;transform:scaleX(0.78)">TEST</div>
<div class="t" style="left:530px;top:543px;font-family:'Liberation Serif',serif;font-size:9.5px;line-height:11px;color:#333;transform-origin:0 0;transform:scaleX(0.78)">TEST</div>
<div class="t" style="left:686px;top:543px;font-family:'Liberation Serif',serif;font-size:9.5px;line-height:11px;color:#444;transform-origin:0 0;transform:scaleX(0.78)">2023</div>

<div class="badge" style="left:448px;top:475px;width:39px;height:17px;border-radius:0;font-size:10.5px;padding-top:1.5px;letter-spacing:0.2px">Text15</div>
<div class="badge" style="left:585px;top:475px;width:39px;height:17px;border-radius:0;font-size:10.5px;padding-top:1.5px;letter-spacing:0.2px">Text16</div>
<div class="badge" style="left:703px;top:475px;width:40px;height:17px;border-radius:0;font-size:10.5px;padding-top:1.5px;letter-spacing:0.2px">Text17</div>
<div class="badge" style="left:526px;top:506px;width:40px;height:17px;border-radius:0;font-size:10.5px;padding-top:1.5px;letter-spacing:0.2px">Text18</div>
<div class="badge" style="left:703px;top:506px;width:40px;height:17px;border-radius:0;font-size:10.5px;padding-top:1.5px;letter-spacing:0.2px">Text19</div>
<div class="badge" style="left:448px;top:539px;width:39px;height:17px;border-radius:0;font-size:10.5px;padding-top:1.5px;letter-spacing:0.2px">Text20</div>
<div class="badge" style="left:585px;top:539px;width:38px;height:17px;border-radius:0;font-size:10.5px;padding-top:1.5px;letter-spacing:0.2px">Text21</div>
<div class="badge" style="left:703px;top:539px;width:40px;height:17px;border-radius:0;font-size:10.5px;padding-top:1.5px;letter-spacing:0.2px">Text22</div>

<div class="t" style="left:736px;top:582px;font-size:8px;line-height:9px;color:#555;transform-origin:0 0;transform:scaleX(0.93)">Page 1</div>

<!-- arrow -->
<svg class="a" style="left:0;top:0;pointer-events:none" width="1379" height="816" viewBox="0 0 1379 816">
<path d="M691.7 83.8L593.6 366.3L587.8 363.1L590.2 385L606.2 369.3L600.6 368.8L694 84.5Z" fill="#3d47cf"/>
</svg>

<!-- ===== page 2 content ===== -->
<div class="conf" style="left:1109px;top:106px;font-size:12.6px;line-height:14px;transform-origin:0 0;transform:scaleX(0.93)">CONFIDENTIAL</div>
<div class="t" style="left:838px;top:125.5px;font-size:10px;line-height:10px;color:#6a6a6a;transform-origin:0 0;transform:scaleX(0.86)">TABLE OF CONTENTS</div>
<div class="a" style="left:0;top:0;font-size:6.5px;line-height:7px;color:#444">
<div class="tc" style="left:838.3px;top:142.1px">1.</div>
<div class="tc tl" style="left:852.6px;top:142.1px;width:332.9px"><span>EXECUTIVE SUMMARY</span></div>
<div class="tc" style="left:1170px;top:142.1px;width:20.5px;text-align:right">3</div>
<div class="tc" style="left:838.3px;top:150.6px">2.</div>
<div class="tc tl" style="left:852.6px;top:150.6px;width:332.9px"><span>MISSION STATEMENT</span></div>
<div class="tc" style="left:1170px;top:150.6px;width:20.5px;text-align:right">4</div>
<div class="tc" style="left:838.3px;top:159.1px">3.</div>
<div class="tc tl" style="left:852.6px;top:159.1px;width:332.9px"><span>VISION STATEMENT</span></div>
<div class="tc" style="left:1170px;top:159.1px;width:20.5px;text-align:right">4</div>
<div class="tc" style="left:838.3px;top:167.6px">4.</div>
<div class="tc tl" style="left:852.6px;top:167.6px;width:332.9px"><span>SITUATIONAL ANALYSIS</span></div>
<div class="tc" style="left:1170px;top:167.6px;width:20.5px;text-align:right">5</div>
<div class="tc" style="left:845.6px;top:176.1px">4.1</div>
<div class="tc tl" style="left:870.0px;top:176.1px;width:315.5px"><span>5C ANALYSIS</span></div>
<div class="tc" style="left:1170px;top:176.1px;width:20.5px;text-align:right">5</div>
<div class="tc" style="left:853.1px;top:184.5px">4.1.1</div>
<div class="tc tl" style="left:878.1px;top:184.5px;width:307.4px"><span>COMPANY</span></div>
<div class="tc" style="left:1170px;top:184.5px;width:20.5px;text-align:right">5</div>
<div class="tc" style="left:853.1px;top:193.0px">4.1.2</div>
<div class="tc tl" style="left:878.1px;top:193.0px;width:307.4px"><span>COLLABORATORS</span></div>
<div class="tc" style="left:1170px;top:193.0px;width:20.5px;text-align:right">5</div>
<div class="tc" style="left:853.1px;top:201.5px">4.1.3</div>
<div class="tc tl" style="left:878.1px;top:201.5px;width:307.4px"><span>CUSTOMERS</span></div>
<div class="tc" style="left:1170px;top:201.5px;width:20.5px;text-align:right">5</div>
<div class="tc" style="left:853.1px;top:210.0px">4.1.4</div>
<div class="tc tl" style="left:878.1px;top:210.0px;width:307.4px"><span>COMPETITORS</span></div>
<div class="tc" style="left:1170px;top:210.0px;width:20.5px;text-align:right">5</div>
<div class="tc" style="left:853.1px;top:218.5px">4.1.5</div>
<div class="tc tl" style="left:878.1px;top:218.5px;width:307.4px"><span>CLIMATE</span></div>
<div class="tc" style="left:1170px;top:218.5px;width:20.5px;text-align:right">5</div>
<div class="tc" style="left:845.6px;top:227.0px">4.2</div>
<div class="tc tl" style="left:870.0px;top:227.0px;width:315.5px"><span>SWOT ANALYSIS</span></div>
<div class="tc" style="left:1170px;top:227.0px;width:20.5px;text-align:right">6</div>
<div class="tc" style="left:838.3px;top:235.5px">5.</div>
<div class="tc tl" style="left:852.6px;top:235.5px;width:332.9px"><span>CORE CAPABILITIES</span></div>
<div class="tc" style="left:1170px;top:235.5px;width:20.5px;text-align:right">7</div>
<div class="tc" style="left:838.3px;top:244.0px">6.</div>
<div class="tc tl" style="left:852.6px;top:244.0px;width:332.9px"><span>GOALS</span></div>
<div class="tc" style="left:1170px;top:244.0px;width:20.5px;text-align:right">8</div>
<div class="tc" style="left:845.6px;top:252.5px">6.1</div>
<div class="tc tl" style="left:870.0px;top:252.5px;width:315.5px"><span>BUSINESS GOALS</span></div>
<div class="tc" style="left:1170px;top:252.5px;width:20.5px;text-align:right">8</div>
<div class="tc" style="left:845.6px;top:261.0px">6.2</div>
<div class="tc tl" style="left:870.0px;top:261.0px;width:315.5px"><span>SALES GOALS</span></div>
<div class="tc" style="left:1170px;top:261.0px;width:20.5px;text-align:right">8</div>
<div class="tc" style="left:845.6px;top:269.4px">6.3</div>
<div class="tc tl" style="left:870.0px;top:269.4px;width:315.5px"><span>FINANCIAL GOALS</span></div>
<div class="tc" style="left:1170px;top:269.4px;width:20.5px;text-align:right">9</div>
<div class="tc" style="left:845.6px;top:277.9px">6.4</div>
<div class="tc tl" style="left:870.0px;top:277.9px;width:315.5px"><span>MARKETING GOALS</span></div>
<div class="tc" style="left:1170px;top:277.9px;width:20.5px;text-align:right">9</div>
<div class="tc" style="left:838.3px;top:286.4px">7.</div>
<div class="tc tl" style="left:852.6px;top:286.4px;width:332.9px"><span>TARGET MARKET</span></div>
<div class="tc" style="left:1170px;top:286.4px;width:20.5px;text-align:right">10</div>
<div class="tc" style="left:845.6px;top:294.9px">7.1</div>
<div class="tc tl" style="left:870.0px;top:294.9px;width:315.5px"><span>INFORMATION COLLECTION</span></div>
<div class="tc" style="left:1170px;top:294.9px;width:20.5px;text-align:right">10</div>
<div class="tc" style="left:845.6px;top:303.4px">7.2</div>
<div class="tc tl" style="left:870.0px;top:303.4px;width:315.5px"><span>PAIN POINTS</span></div>
<div class="tc" style="left:1170px;top:303.4px;width:20.5px;text-align:right">10</div>
<div class="tc" style="left:845.6px;top:311.9px">7.3</div>
<div class="tc tl" style="left:870.0px;top:311.9px;width:315.5px"><span>SOLUTIONS</span></div>
<div class="tc" style="left:1170px;top:311.9px;width:20.5px;text-align:right">11</div>
<div class="tc" style="left:845.6px;top:320.4px">7.4</div>
<div class="tc tl" style="left:870.0px;top:320.4px;width:315.5px"><span>BUYER PERSONA</span></div>
<div class="tc" style="left:1170px;top:320.4px;width:20.5px;text-align:right">11</div>
<div class="tc" style="left:838.3px;top:328.9px">8.</div>
<div class="tc tl" style="left:852.6px;top:328.9px;width:332.9px"><span>MARKETING STRATEGY</span></div>
<div class="tc" style="left:1170px;top:328.9px;width:20.5px;text-align:right">12</div>
<div class="tc" style="left:845.6px;top:337.4px">8.1</div>
<div class="tc tl" style="left:870.0px;top:337.4px;width:315.5px"><span>BUYER'S BUYING CYCLE</span></div>
<div class="tc" style="left:1170px;top:337.4px;width:20.5px;text-align:right">12</div>
<div class="tc" style="left:845.6px;top:345.9px">8.2</div>
<div class="tc tl" style="left:870.0px;top:345.9px;width:315.5px"><span>UNIQUE SELLING PROPOSITION (USP)</span></div>
<div class="tc" style="left:1170px;top:345.9px;width:20.5px;text-align:right">12</div>
<div class="tc" style="left:845.6px;top:354.3px">8.3</div>
<div class="tc tl" style="left:870.0px;top:354.3px;width:315.5px"><span>BRANDING</span></div>
<div class="tc" style="left:1170px;top:354.3px;width:20.5px;text-align:right">13</div>
<div class="tc" style="left:845.6px;top:362.8px">8.4</div>
<div class="tc tl" style="left:870.0px;top:362.8px;width:315.5px"><span>MARKETING MIX – 4Ps</span></div>
<div class="tc" style="left:1170px;top:362.8px;width:20.5px;text-align:right">13</div>
<div class="tc" style="left:853.1px;top:371.3px">8.4.1</div>
<div class="tc tl" style="left:878.1px;top:371.3px;width:307.4px"><span>PRODUCT</span></div>
<div class="tc" style="left:1170px;top:371.3px;width:20.5px;text-align:right">13</div>
<div class="tc" style="left:853.1px;top:379.8px">8.4.2</div>
<div class="tc tl" style="left:878.1px;top:379.8px;width:307.4px"><span>PRICE</span></div>
<div class="tc" style="left:1170px;top:379.8px;width:20.5px;text-align:right">13</div>
<div class="tc" style="left:853.1px;top:388.3px">8.4.3</div>
<div class="tc tl" style="left:878.1px;top:388.3px;width:307.4px"><span>PLACE</span></div>
<div class="tc" style="left:1170px;top:388.3px;width:20.5px;text-align:right">14</div>
<div class="tc" style="left:853.1px;top:396.8px">8.4.4</div>
<div class="tc tl" style="left:878.1px;top:396.8px;width:307.4px"><span>PROMOTION</span></div>
<div class="tc" style="left:1170px;top:396.8px;width:20.5px;text-align:right">14</div>
<div class="tc" style="left:845.6px;top:405.3px">8.5</div>
<div class="tc tl" style="left:870.0px;top:405.3px;width:315.5px"><span>MARKETING CHANNELS</span></div>
<div class="tc" style="left:1170px;top:405.3px;width:20.5px;text-align:right">14</div>
<div class="tc" style="left:845.6px;top:413.8px">8.6</div>
<div class="tc tl" style="left:870.0px;top:413.8px;width:315.5px"><span>BUDGET</span></div>
<div class="tc" style="left:1170px;top:413.8px;width:20.5px;text-align:right">15</div>
<div class="tc" style="left:838.3px;top:422.3px">9.</div>
<div class="tc tl" style="left:852.6px;top:422.3px;width:332.9px"><span>PERFORMANCE STANDARDS &amp; MEASUREMENT METHODS</span></div>
<div class="tc" style="left:1170px;top:422.3px;width:20.5px;text-align:right">16</div>
<div class="tc" style="left:845.6px;top:430.8px">9.1</div>
<div class="tc tl" style="left:870.0px;top:430.8px;width:315.5px"><span>STANDARDS OF PERFORMANCE</span></div>
<div class="tc" style="left:1170px;top:430.8px;width:20.5px;text-align:right">16</div>
<div class="tc" style="left:845.6px;top:439.2px">9.2</div>
<div class="tc tl" style="left:870.0px;top:439.2px;width:315.5px"><span>BENCHMARKS</span></div>
<div class="tc" style="left:1170px;top:439.2px;width:20.5px;text-align:right">16</div>
<div class="tc" style="left:845.6px;top:447.7px">9.3</div>
<div class="tc tl" style="left:870.0px;top:447.7px;width:315.5px"><span>MARKETING METRICS TO MEASURE SUCCESS</span></div>
<div class="tc" style="left:1170px;top:447.7px;width:20.5px;text-align:right">17</div>
<div class="tc" style="left:845.6px;top:456.2px">9.4</div>
<div class="tc tl" style="left:870.0px;top:456.2px;width:315.5px"><span>MEASUREMENT METHODS</span></div>
<div class="tc" style="left:1170px;top:456.2px;width:20.5px;text-align:right">17</div>
<div class="tc" style="left:838.3px;top:464.7px">10.</div>
<div class="tc tl" style="left:852.6px;top:464.7px;width:332.9px"><span>FINANCIAL SUMMARY</span></div>
<div class="tc" style="left:1170px;top:464.7px;width:20.5px;text-align:right">18</div>
<div class="tc" style="left:845.6px;top:473.2px">10.1</div>
<div class="tc tl" style="left:870.0px;top:473.2px;width:315.5px"><span>FINANCIAL FORECASTS</span></div>
<div class="tc" style="left:1170px;top:473.2px;width:20.5px;text-align:right">18</div>
<div class="tc" style="left:845.6px;top:481.7px">10.2</div>
<div class="tc tl" style="left:870.0px;top:481.7px;width:315.5px"><span>BREAKEVEN ANALYSIS</span></div>
<div class="tc" style="left:1170px;top:481.7px;width:20.5px;text-align:right">18</div>
<div class="tc" style="left:845.6px;top:490.2px">10.3</div>
<div class="tc tl" style="left:870.0px;top:490.2px;width:315.5px"><span>FINANCIAL STATEMENTS</span></div>
<div class="tc" style="left:1170px;top:490.2px;width:20.5px;text-align:right">19</div>
<div class="tc" style="left:853.1px;top:498.7px">10.3.1</div>
<div class="tc tl" style="left:886.0px;top:498.7px;width:299.5px"><span>INCOME STATEMENT</span></div>
<div class="tc" style="left:1170px;top:498.7px;width:20.5px;text-align:right">19</div>
<div class="tc" style="left:853.1px;top:507.2px">10.3.2</div>
<div class="tc tl" style="left:886.0px;top:507.2px;width:299.5px"><span>CASH FLOW PROJECTION</span></div>
<div class="tc" style="left:1170px;top:507.2px;width:20.5px;text-align:right">19</div>
<div class="tc" style="left:853.1px;top:515.7px">10.3.3</div>
<div class="tc tl" style="left:886.0px;top:515.7px;width:299.5px"><span>BALANCE SHEET</span></div>
<div class="tc" style="left:1170px;top:515.7px;width:20.5px;text-align:right">19</div>
<div class="tc" style="left:838.3px;top:524.1px">11.</div>
<div class="tc tl" style="left:852.6px;top:524.1px;width:332.9px"><span>APPENDIX</span></div>
<div class="tc" style="left:1170px;top:524.1px;width:20.5px;text-align:right">20</div>
<div class="tc" style="left:845.6px;top:532.6px">11.1</div>
<div class="tc tl" style="left:870.0px;top:532.6px;width:315.5px"><span>RESEARCH RESULTS</span></div>
<div class="tc" style="left:1170px;top:532.6px;width:20.5px;text-align:right">20</div>
<div class="tc" style="left:845.6px;top:541.1px">11.2</div>
<div class="tc tl" style="left:870.0px;top:541.1px;width:315.5px"><span>PRODUCT SPECIFICATIONS AND IMAGES</span></div>
<div class="tc" style="left:1170px;top:541.1px;width:20.5px;text-align:right">20</div>
</div>

<div class="t" style="left:1165px;top:582px;font-size:8px;line-height:9px;color:#555;transform-origin:0 0;transform:scaleX(0.93)">Page 2</div>

<!-- ===== page 3 / 4 ===== -->
<div class="conf" style="left:671px;top:656px;font-size:12.6px;line-height:14px;transform-origin:0 0;transform:scaleX(0.93)">CONFIDENTIAL</div>
<div class="t" style="left:409px;top:670px;font-size:10.4px;line-height:11px;color:#626262;word-spacing:1.5px;transform-origin:0 0;transform:scaleX(0.87)">1. EXECUTIVE SUMMARY</div>
<div class="a" style="left:408px;top:687px;width:349px;height:130px;background:#dce3fe;border:1px solid #d4d4d4"></div>
<div class="t" style="left:412.4px;top:691px;font-family:'Liberation Mono',monospace;font-size:8.9px;line-height:10px;color:#2a2a2a;transform-origin:0 0;transform:scaleX(0.815)">UPDF is a comprehensive PDF editor that provides powerful features.</div>

<div class="conf" style="left:1109px;top:656px;font-size:12.6px;line-height:14px;transform-origin:0 0;transform:scaleX(0.93)">CONFIDENTIAL</div>
<div class="t" style="left:838px;top:675px;font-size:10.4px;line-height:11px;color:#626262;word-spacing:1.5px;transform-origin:0 0;transform:scaleX(0.87)">2. MISSION STATEMENT</div>
<div class="a" style="left:838px;top:693px;width:348px;height:130px;background:#dce3fe;border:1px solid #d4d4d4"></div>

<!-- bottom clip strip -->
<div class="a" style="left:357px;top:806px;width:1007px;height:10px;background:#f6f6f6"></div>

<!-- ===== floating zoom bar ===== -->
<div class="a" style="left:658px;top:748px;width:403px;height:33px;border-radius:5px;background:#f5f5f5;box-shadow:0 1px 4px rgba(0,0,0,0.16)"></div>
<svg class="a" style="left:668px;top:756px" width="18" height="18" viewBox="0 0 18 18"><circle cx="8.5" cy="9.3" r="7" fill="none" stroke="#3a3a3a" stroke-width="1.1"/><path d="M5 9.3H12" stroke="#3a3a3a" stroke-width="1.2"/></svg>
<div class="t" style="left:706px;top:759.5px;font-size:12px;line-height:12px;color:#3a3a3a;letter-spacing:-0.3px">70%</div>
<svg class="a" style="left:753px;top:761px" width="9" height="7" viewBox="0 0 9 7"><path d="M1.3 1.4H7.8L4.55 6.5Z" fill="#555"/></svg>
<svg class="a" style="left:777px;top:756px" width="18" height="18" viewBox="0 0 18 18"><circle cx="8.6" cy="9.3" r="7" fill="none" stroke="#3a3a3a" stroke-width="1.1"/><path d="M5.1 9.3H12.1M8.6 5.8V12.8" stroke="#3a3a3a" stroke-width="1.2"/></svg>
<div class="a" style="left:804.2px;top:759.2px;width:1px;height:9.3px;background:#a8a8a8"></div>
<svg class="a" style="left:817px;top:758px" width="15" height="14" viewBox="0 0 15 14"><path d="M2.5 3.2H12.7M2.8 10.2L7.6 5.6L12.4 10.2" fill="none" stroke="#b8b8b8" stroke-width="1.1"/></svg>
<svg class="a" style="left:850px;top:757px" width="15" height="15" viewBox="0 0 15 15"><path d="M3 8L7.8 3.4L12.6 8M3 12.2L7.8 7.6L12.6 12.2" fill="none" stroke="#b8b8b8" stroke-width="1.1"/></svg>
<div class="a" style="left:878px;top:751px;width:76px;height:26px;border-radius:4px;background:#fff;border:1px solid #e8e8e8"></div>
<div class="t" style="left:898.2px;top:758.2px;font-size:12.4px;line-height:12.4px;color:#222">2</div>
<div class="t" style="left:912.3px;top:758.2px;font-size:12.4px;line-height:12.4px;color:#222">/</div>
<div class="t" style="left:925.6px;top:758.2px;font-size:12.4px;line-height:12.4px;color:#222;letter-spacing:-0.3px">21</div>
<svg class="a" style="left:964px;top:757px" width="15" height="15" viewBox="0 0 15 15"><path d="M2.2 3.3L7 7.6L11.8 3.3M2.2 7.5L7 11.8L11.8 7.5" fill="none" stroke="#333" stroke-width="1.2"/></svg>
<svg class="a" style="left:997px;top:758px" width="15" height="14" viewBox="0 0 15 14"><path d="M2.8 3.5L7.5 7.6L12.2 3.5M2.2 10.3H12.8" fill="none" stroke="#333" stroke-width="1.1"/></svg>
<div class="a" style="left:1024px;top:760.3px;width:1px;height:8.2px;background:#a8a8a8"></div>
<svg class="a" style="left:1037px;top:758px" width="14" height="14" viewBox="0 0 14 14"><path d="M1.8 1.8L13 13M13 1.8L1.8 13" stroke="#333" stroke-width="1.2"/></svg>
<div class="a" style="left:948px;top:777.3px;width:126px;height:21.3px;border-radius:3px;background:#58585c"></div>
<div class="t" style="left:952.3px;top:783.4px;font-size:11.2px;line-height:11.2px;color:#fff;transform-origin:0 0;transform:scaleX(0.935)">2 MISSION STATEMENT</div>

<!-- scrollbars -->
<div class="a" style="left:359px;top:808px;width:988px;height:6px;border-radius:3px;background:#b0b0b0"></div>
<div class="a" style="left:1356px;top:90px;width:6px;height:80px;border-radius:3px;background:#b0b0b0"></div>

</body></html>
